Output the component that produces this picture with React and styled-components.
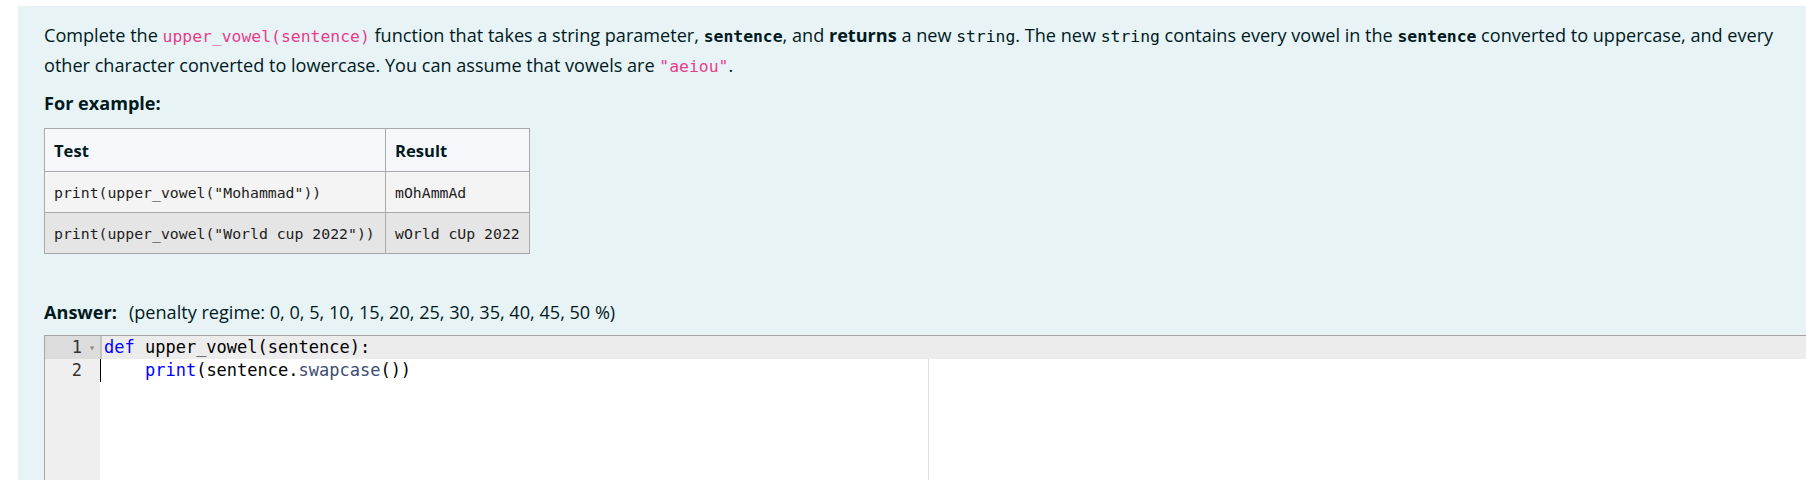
import React from "react";
import styled, { createGlobalStyle } from "styled-components";

const GlobalStyle = createGlobalStyle`
  html, body {
    margin: 0;
    padding: 0;
    background: #fff;
    overflow: hidden;
  }
  body {
    font-family: "Open Sans", "Noto Sans", sans-serif;
    color: #001a1e;
  }
`;

const Page = styled.div`
  padding: 6px 0 0 18px;
`;

const Formulation = styled.div`
  background: #e7f3f5;
  padding: 15px 0 0 26px;
  min-height: 480px;
`;

const Prompt = styled.p`
  margin: 0 0 8px;
  max-width: 1750px;
  font-size: 18.1px;
  line-height: 29px;
`;

const Code = styled.code`
  font-family: "DejaVu Sans Mono", "Liberation Mono", monospace;
  font-size: 16.4px;
  color: ${(p) => (p.$plain ? "#001a1e" : "#e83e8c")};
  font-weight: ${(p) => (p.$bold ? 700 : 400)};
`;

const Heading = styled.div`
  font-weight: 700;
  font-size: 18.1px;
  line-height: 29px;
  margin-bottom: 10px;
`;

const ExampleTable = styled.table`
  border-collapse: collapse;
  margin-bottom: 44px;
`;

const Th = styled.th`
  background: #f7f8fc;
  border: 1px solid #a9a9a9;
  text-align: left;
  font-size: 16.6px;
  font-weight: 700;
  height: 43px;
  padding: 0 9px;
  width: ${(p) => p.$width}px;
  box-sizing: border-box;
`;

const Td = styled.td`
  background: ${(p) => (p.$alt ? "#e5e5e5" : "#f4f4f4")};
  border: 1px solid #a9a9a9;
  font-family: "DejaVu Sans Mono", "Liberation Mono", monospace;
  font-size: 14.8px;
  color: #1d1d1d;
  height: 40px;
  padding: 0 9px;
  white-space: pre;
`;

const AnswerLine = styled.div`
  font-size: 18.1px;
  line-height: 29px;
  margin-bottom: 8px;
  display: flex;
  gap: 12px;
  b {
    font-weight: 700;
  }
`;

const Editor = styled.div`
  display: flex;
  border-top: 1px solid #a6a6a6;
  border-left: 1px solid #a6a6a6;
  height: 300px;
  margin-right: -40px;
  background: #fff;
  font-family: "DejaVu Sans Mono", "Liberation Mono", monospace;
  font-size: 17px;
  line-height: 23px;
`;

const Gutter = styled.div`
  width: 55px;
  background: #efefef;
  color: #333;
  flex-shrink: 0;
`;

const GutterCell = styled.div`
  display: flex;
  justify-content: flex-end;
  align-items: center;
  height: 23px;
  padding-right: 18px;
  position: relative;
  background: ${(p) => (p.$active ? "#dcdcdc" : "transparent")};
`;

const Fold = styled.span`
  position: absolute;
  right: 5px;
  top: 0;
  font-size: 10px;
  color: #888;
`;

const Lines = styled.div`
  flex: 1;
  position: relative;
`;

const PrintMargin = styled.div`
  position: absolute;
  left: 828px;
  top: 0;
  bottom: 0;
  width: 1px;
  background: #e0e0e0;
`;

const Line = styled.div`
  height: 23px;
  white-space: pre;
  color: #000;
  position: relative;
  z-index: 1;
  background: ${(p) => (p.$active ? "#ececec" : "transparent")};
  border-left: ${(p) => (p.$active ? "2px solid #c4c4c4" : "1px solid #000")};
  padding-left: ${(p) => (p.$active ? "2px" : "3px")};
`;

const Kw = styled.span`
  color: #0000ff;
`;

const Fn = styled.span`
  color: #3c4c72;
`;

export default function App() {
  return (
    <>
      <GlobalStyle />
      <Page>
        <Formulation>
          <Prompt>
            Complete the <Code>upper_vowel(sentence)</Code> function that takes a string
            parameter, <Code $plain $bold>sentence</Code>, and <strong>returns</strong> a new{" "}
            <Code $plain>string</Code>. The new <Code $plain>string</Code> contains every vowel in the{" "}
            <Code $plain $bold>sentence</Code> converted to uppercase, and every other character
            converted to lowercase. You can assume that vowels are <Code>"aeiou"</Code>.
          </Prompt>
          <Heading>For example:</Heading>
          <ExampleTable>
            <thead>
              <tr>
                <Th $width={341}>Test</Th>
                <Th $width={143}>Result</Th>
              </tr>
            </thead>
            <tbody>
              <tr>
                <Td>print(upper_vowel("Mohammad"))</Td>
                <Td>mOhAmmAd</Td>
              </tr>
              <tr>
                <Td $alt>print(upper_vowel("World cup 2022"))</Td>
                <Td $alt>wOrld cUp 2022</Td>
              </tr>
            </tbody>
          </ExampleTable>
          <AnswerLine>
            <b>Answer:</b>
            <span>(penalty regime: 0, 0, 5, 10, 15, 20, 25, 30, 35, 40, 45, 50 %)</span>
          </AnswerLine>
          <Editor>
            <Gutter>
              <GutterCell $active>
                1<Fold>▾</Fold>
              </GutterCell>
              <GutterCell>2</GutterCell>
            </Gutter>
            <Lines>
              <PrintMargin />
              <Line $active>
                <Kw>def</Kw> upper_vowel(sentence):
              </Line>
              <Line>
                {"    "}
                <Kw>print</Kw>(sentence.<Fn>swapcase</Fn>())
              </Line>
            </Lines>
          </Editor>
        </Formulation>
      </Page>
    </>
  );
}
